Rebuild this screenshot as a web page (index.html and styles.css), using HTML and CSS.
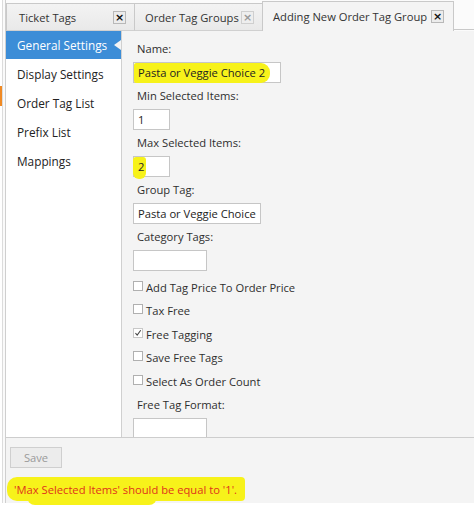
FILE: index.html
```html
<!DOCTYPE html>
<html>
<head>
<meta charset="utf-8">
<link rel="stylesheet" href="styles.css">
</head>
<body>
<div class="screen">
  <div class="gutter"><span class="orange"></span></div>
  <div class="main">
    <div class="tabs">
      <div class="tab t1"><span class="tab-title">Ticket Tags</span><span class="close">×</span></div>
      <div class="tab t2"><span class="tab-title">Order Tag Groups</span><span class="close faded">×</span></div>
      <div class="tab active"><span class="tab-title">Adding New Order Tag Group</span><span class="close">×</span></div>
      <div class="tab-rest"></div>
    </div>
    <div class="body">
      <div class="sidebar">
        <div class="nav selected">General Settings<span class="notch"></span></div>
        <div class="nav">Display Settings</div>
        <div class="nav">Order Tag List</div>
        <div class="nav">Prefix List</div>
        <div class="nav">Mappings</div>
      </div>
      <div class="content">
        <div class="label">Name:</div>
        <div class="input wide hl-name"><span class="val">Pasta or Veggie Choice 2</span></div>
        <div class="label">Min Selected Items:</div>
        <div class="input small"><span class="val">1</span></div>
        <div class="label">Max Selected Items:</div>
        <div class="input small hl-two"><span class="val">2</span></div>
        <div class="label">Group Tag:</div>
        <div class="input group"><span class="val">Pasta or Veggie Choice</span></div>
        <div class="label">Category Tags:</div>
        <div class="input medium"></div>
        <div class="checks">
          <div class="check"><span class="box"></span>Add Tag Price To Order Price</div>
          <div class="check"><span class="box"></span>Tax Free</div>
          <div class="check"><span class="box checked"><svg viewBox="0 0 10 10" width="10" height="10"><path d="M1.8 5.2 L4 7.6 L8.4 1.6" fill="none" stroke="#444" stroke-width="1.3"/></svg></span>Free Tagging</div>
          <div class="check"><span class="box"></span>Save Free Tags</div>
          <div class="check"><span class="box"></span>Select As Order Count</div>
        </div>
        <div class="label last">Free Tag Format:</div>
        <div class="input medium"></div>
      </div>
    </div>
    <div class="footer">
      <div class="save">Save</div>
      <div class="error"><span class="err-text">'Max Selected Items' should be equal to '1'.</span></div>
    </div>
  </div>
</div>
</body>
</html>
```

FILE: styles.css
```css
* { box-sizing: border-box; }
html, body { margin: 0; padding: 0; background: #ffffff; }
body {
  width: 474px;
  height: 510px;
  overflow: hidden;
  font-family: "Open Sans", "Noto Sans", sans-serif;
  font-size: 11.2px;
  color: #2e2e2e;
}
.screen {
  display: flex;
  width: 474px;
  height: 503px;
}
.gutter {
  position: relative;
  width: 6px;
  flex: none;
  border-right: 1px solid #cfcfcf;
  background: linear-gradient(to right, #fff 0, #fff 2px, #dcdcdc 2px, #dcdcdc 3px, #fafafa 3px);
}
.orange {
  position: absolute;
  left: 0;
  top: 86px;
  width: 2px;
  height: 20px;
  background: #f08a24;
}
.main {
  flex: 1;
  display: flex;
  flex-direction: column;
  min-width: 0;
}
.tabs {
  height: 31px;
  display: flex;
  align-items: flex-end;
  background: #fbfbfb;
  flex: none;
}
.tab {
  height: 28px;
  display: flex;
  align-items: center;
  justify-content: space-between;
  border: 1px solid #c9c9c9;
  border-right: none;
  border-bottom: 1px solid #d0d0d0;
  background: linear-gradient(#f3f3f3, #e9e9e9);
  padding: 0 8px 0 12px;
  color: #333;
  font-size: 11.2px;
  white-space: nowrap;
}
.t1 { width: 128px; }
.t2 { width: 128px; padding-left: 10px; }
.tab.active {
  width: 192px;
  height: 30px;
  background: #f4f4f4;
  border-right: 1px solid #c9c9c9;
  border-bottom: none;
  padding-left: 10px;
  padding-right: 9px;
}
.tab-rest {
  flex: 1;
  height: 2px;
  border-bottom: 1px solid #c9c9c9;
  margin-bottom: 1px;
}
.close {
  width: 13px;
  height: 13px;
  border: 1px solid #b8b8b8;
  background: #ececec;
  display: flex;
  align-items: center;
  justify-content: center;
  font-family: "DejaVu Sans", sans-serif;
  font-size: 11px;
  font-weight: bold;
  line-height: 1;
  color: #111;
}
.close.faded { color: #999; background: #eeeeee; border-color: #cfcfcf; }
.body {
  flex: 1;
  display: flex;
  min-height: 0;
}
.sidebar {
  width: 116px;
  flex: none;
  background: #ffffff;
  border-right: 1px solid #d0d0d0;
}
.nav {
  position: relative;
  height: 29px;
  line-height: 29px;
  padding-left: 11px;
  font-size: 11.8px;
  color: #222;
  white-space: nowrap;
}
.nav.selected {
  background: #3c8dd7;
  color: #ffffff;
  height: 28px;
  line-height: 28px;
  margin-bottom: 1px;
}
.notch {
  position: absolute;
  right: 0;
  top: 9px;
  width: 0;
  height: 0;
  border-top: 5px solid transparent;
  border-bottom: 5px solid transparent;
  border-right: 7px solid #f4f4f4;
}
.content {
  flex: 1;
  background: #f4f4f4;
  padding: 9px 0 0 11px;
  overflow: hidden;
}
.label {
  height: 18px;
  line-height: 18px;
  padding-left: 4px;
  margin-bottom: 4px;
}
.label.last { margin-top: 3px; }
.input {
  position: relative;
  height: 21px;
  line-height: 19px;
  border: 1px solid #c6c6c6;
  background: #ffffff;
  padding-left: 4px;
  margin-bottom: 4px;
  color: #222;
  white-space: nowrap;
}
.input .val { position: relative; z-index: 1; }
.wide { width: 148px; }
.small { width: 37px; }
.group { width: 128px; }
.medium { width: 74px; }
.hl-name::before {
  content: "";
  position: absolute;
  left: 0;
  top: 0;
  width: 136px;
  height: 20px;
  background: #f7f21a;
  border-radius: 2px 9px 9px 2px;
}
.hl-two::before {
  content: "";
  position: absolute;
  left: -1px;
  top: 0;
  width: 13px;
  height: 22px;
  background: #f7f21a;
  border-radius: 3px 3px 6px 6px;
}
.checks {
  margin-top: 4.5px;
}
.check {
  height: 23.5px;
  display: flex;
  align-items: center;
}
.box {
  width: 10px;
  height: 10px;
  border: 1px solid #b0b0b0;
  background: #fff;
  margin-right: 3px;
  margin-top: -3px;
  display: flex;
  align-items: center;
  justify-content: center;
}
.box.checked { border-color: #c8c8c8; }
.box svg { display: block; }
.footer {
  height: 66px;
  flex: none;
  border-top: 1px solid #cdcdcd;
  background: #f4f4f4;
  padding: 9px 0 0 4px;
  position: relative;
}
.save {
  width: 52px;
  height: 21px;
  border: 1px solid #cfcfcf;
  background: #ececec;
  color: #9a9a9a;
  line-height: 19px;
  text-align: center;
}
.error {
  position: relative;
  margin-top: 11px;
  margin-left: -3px;
  height: 22px;
  line-height: 22px;
  color: #e0321c;
}
.error::before {
  content: "";
  position: absolute;
  left: 0;
  top: -2px;
  width: 238px;
  height: 24px;
  background: #f7f21a;
  border-radius: 10px 4px 4px 10px;
}
.error::after {
  content: "";
  position: absolute;
  left: 20px;
  top: 14px;
  width: 130px;
  height: 12px;
  background: #f7f21a;
  border-radius: 3px 3px 8px 8px;
}
.err-text {
  position: relative;
  z-index: 1;
  padding-left: 7px;
}
```
